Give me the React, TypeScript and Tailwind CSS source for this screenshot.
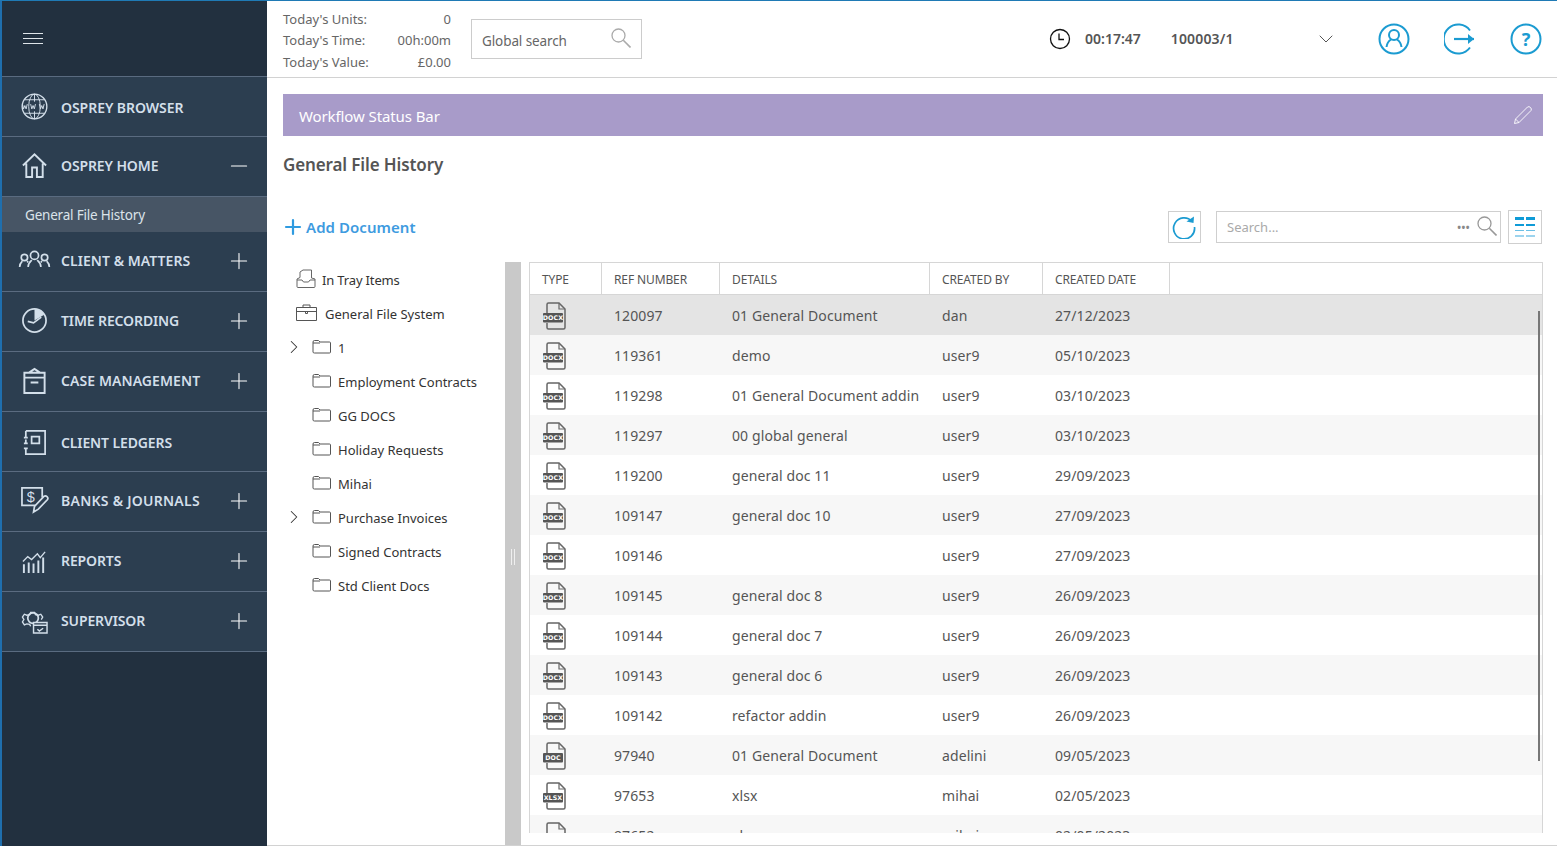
import { ChevronDown, ChevronRight, Minus, Plus } from 'lucide-react';
import type { ReactNode } from 'react';

const font = "font-['Noto_Sans','Open_Sans',sans-serif]";

function Svg({ size, children, className }: { size: number; children: ReactNode; className?: string }) {
  return (
    <svg width={size} height={size} viewBox="0 0 28 28" fill="none" stroke="currentColor" strokeWidth="1.4" className={className}>
      {children}
    </svg>
  );
}

function SearchGlass({ className }: { className?: string }) {
  return (
    <svg width="20" height="20" viewBox="0 0 20 20" fill="none" stroke="currentColor" strokeWidth="1.300" className={className}>
      <circle cx="7.500" cy="7.500" r="6.500" />
      <path d="M12.300 12.300L19.500 19.500" strokeWidth="1.600" />
    </svg>
  );
}

const navIcons: Record<string, ReactNode> = {
  globe: (
    <>
      <circle cx="14" cy="14" r="12.800" />
      <ellipse cx="14" cy="14" rx="6" ry="12.800" strokeWidth="1" />
      <path d="M3.500 7h21M3.500 21h21M14 1v8M14 19v8" strokeWidth="1" />
      <path d="M1.500 11.500l1.200 5 1.300-3.500 1.300 3.500 1.200-5M10 11.500l1.200 5 1.300-3.500 1.300 3.500 1.200-5M19 11.500l1.200 5 1.300-3.500 1.300 3.500 1.200-5" strokeWidth="1" />
    </>
  ),
  home: <path d="M2 14L14 2.500 26 14M5.500 12v14h6V16h5v10h6V12" strokeWidth="2" />,
  clients: (
    <g transform="translate(-1.400 1) scale(1.100)">
      <circle cx="14" cy="7" r="3.800" strokeWidth="1.600" />
      <path d="M8 18c0-4 2.500-5.500 3.500-6.500M20 18c0-4-2.500-5.500-3.500-6.500" strokeWidth="1.600" />
      <circle cx="4.500" cy="9" r="3" strokeWidth="1.600" />
      <path d="M0 18c0-3 1.500-4.500 2.500-5.500M7 12.500l1 1" strokeWidth="1.600" />
      <circle cx="23.500" cy="9" r="3" strokeWidth="1.600" />
      <path d="M28 18c0-3-1.500-4.500-2.500-5.500M21 12.500l-1 1" strokeWidth="1.600" />
    </g>
  ),
  time: (
    <>
      <circle cx="14" cy="14" r="12" strokeWidth="1.800" />
      <path d="M14 2a12 12 0 0 1 10 6l-10 6z" fill="currentColor" stroke="none" />
      <path d="M7 15l6 1.500 8-6" strokeWidth="1.800" />
    </>
  ),
  case: <path d="M3.500 6h21v21h-21zM3.500 11h21M10 16h8M8 6l3-2 3-2 3 2 3 2" strokeWidth="2" />,
  ledger: <path d="M5 2h20v24H5v-5M5 8V2M5 11v3M3 9h4M3 15h4M3 20h4M11 8h8v7h-8z" strokeWidth="1.800" />,
  banks: (
    <>
      <path d="M15 19H1V1h21v10" strokeWidth="1.800" />
      <text x="6" y="15.500" fontSize="15" fill="currentColor" stroke="none" fontFamily="Liberation Sans">$</text>
      <path d="M13 26l1-6L24 9.500q1.500-1 3 .5t.5 3L18 23z" strokeWidth="1.800" />
    </>
  ),
  reports: (
    <>
      <path d="M2 15l5-5 4 3 6-6 3 4 5-6" strokeWidth="1.400" />
      <path d="M3 27V18M8 27V16M13 27V17M18 27V14M23 27V11" strokeWidth="2" />
    </>
  ),
  supervisor: (
    <>
      <path d="M10 20l-1-2-3-.5-2.500 1-2-3 1.500-2.500-1.500-2.500 2-3 2.500 1 3-.5 1-2.500h4l1 2.500 3 .5 2.500-1 2 3-1.500 2.500" strokeWidth="1.400" />
      <circle cx="12.500" cy="11.500" r="5.500" strokeWidth="1.800" />
      <path d="M13 16h14v11H13zM13 19h14M17 23l2 2 4-3" fill="#2c3e50" strokeWidth="1.500" />
    </>
  ),
};

const navItems = [
  { label: 'CLIENT & MATTERS', icon: 'clients', plus: true, pad: 'pb-[2px]', track: 'tracking-[0.05px]' },
  { label: 'TIME RECORDING', icon: 'time', plus: true, pad: 'pb-[2px]' },
  { label: 'CASE MANAGEMENT', icon: 'case', plus: true, pad: 'pb-[2px]', track: 'tracking-[0.08px]' },
  { label: 'CLIENT LEDGERS', icon: 'ledger', plus: false, pad: 'pt-[1px]' },
  { label: 'BANKS & JOURNALS', icon: 'banks', plus: true, pad: 'pb-[2px]', track: 'tracking-[0.25px]' },
  { label: 'REPORTS', icon: 'reports', plus: true, pad: 'pb-[2px]' },
  { label: 'SUPERVISOR', icon: 'supervisor', plus: true, pad: 'pb-[2px]' },
];

function NavRow({ label, icon, trailing, className, labelClass }: { label: string; icon: string; trailing?: ReactNode; className?: string; labelClass?: string }) {
  return (
    <div className={`h-[60px] flex items-center border-b border-[#5a6b80] pl-[19px] pr-[20px] bg-[#2c3e50] text-[#d3dfea] ${className ?? ''}`}>
      <div className="w-[27px] flex justify-center">
        <Svg size={27} className="overflow-visible">{navIcons[icon]}</Svg>
      </div>
      <span className={`ml-[13px] flex-1 text-[14px] font-semibold ${labelClass ?? 'tracking-[-0.12px]'}`}>{label}</span>
      {trailing}
    </div>
  );
}

const tree = [
  { label: 'Employment Contracts' },
  { label: 'GG DOCS' },
  { label: 'Holiday Requests' },
  { label: 'Mihai' },
  { label: 'Purchase Invoices', arrow: true },
  { label: 'Signed Contracts' },
  { label: 'Std Client Docs' },
];

function Folder() {
  return (
    <svg width="19" height="15" viewBox="0 0 19 15" fill="none" stroke="#555" strokeWidth="1" className="-mt-[3px]">
      <path d="M1 13V3q0-1.500 1.500-1.500h4L8 3h9.500q1 0 1 1v9q0 1-1 1h-15q-1.500 0-1.500-1zM1 4h7" />
    </svg>
  );
}

function TreeFolder({ label, arrow }: { label: string; arrow?: boolean }) {
  return (
    <div className="h-[34px] flex items-center pl-[5px]">
      <div className="w-[24px]">{arrow && <ChevronRight size={22} strokeWidth={1.100} className="text-[#333] -ml-[5px] -mt-[2px]" />}</div>
      <Folder />
      <span className="ml-[7px] mt-[2px]">{label}</span>
    </div>
  );
}

function FileIcon({ kind }: { kind: string }) {
  return (
    <svg width="26" height="28" viewBox="0 0 26 28" className="block mt-[1px]">
      <path d="M5 11V2.500q0-1.500 1.500-1.500H17l6 6v18.500q0 1.500-1.500 1.500H6.500Q5 27 5 25.500V21" fill="none" stroke="#666" strokeWidth="1.500" />
      <path d="M17 1v6h6" fill="none" stroke="#666" strokeWidth="1.200" />
      <rect x="1" y="11" width="20" height="9.500" rx="1" fill="#555" />
      <text x="11" y="18.200" textAnchor="middle" fontSize="6.300" fontWeight="700" fill="#fff" fontFamily="DejaVu Sans">{kind}</text>
    </svg>
  );
}

const rows = [
  { kind: 'DOCX', ref: '120097', details: '01 General Document', by: 'dan', date: '27/12/2023' },
  { kind: 'DOCX', ref: '119361', details: 'demo', by: 'user9', date: '05/10/2023' },
  { kind: 'DOCX', ref: '119298', details: '01 General Document addin', by: 'user9', date: '03/10/2023' },
  { kind: 'DOCX', ref: '119297', details: '00 global general', by: 'user9', date: '03/10/2023' },
  { kind: 'DOCX', ref: '119200', details: 'general doc 11', by: 'user9', date: '29/09/2023' },
  { kind: 'DOCX', ref: '109147', details: 'general doc 10', by: 'user9', date: '27/09/2023' },
  { kind: 'DOCX', ref: '109146', details: '', by: 'user9', date: '27/09/2023' },
  { kind: 'DOCX', ref: '109145', details: 'general doc 8', by: 'user9', date: '26/09/2023' },
  { kind: 'DOCX', ref: '109144', details: 'general doc 7', by: 'user9', date: '26/09/2023' },
  { kind: 'DOCX', ref: '109143', details: 'general doc 6', by: 'user9', date: '26/09/2023' },
  { kind: 'DOCX', ref: '109142', details: 'refactor addin', by: 'user9', date: '26/09/2023' },
  { kind: 'DOC', ref: '97940', details: '01 General Document', by: 'adelini', date: '09/05/2023' },
  { kind: 'XLSX', ref: '97653', details: 'xlsx', by: 'mihai', date: '02/05/2023' },
  { kind: 'XLSX', ref: '97652', details: 'xlsx', by: 'mihai', date: '02/05/2023' },
];

const columns = [
  { label: 'TYPE', w: 'w-[72px]' },
  { label: 'REF NUMBER', w: 'w-[118px]' },
  { label: 'DETAILS', w: 'w-[210px]' },
  { label: 'CREATED BY', w: 'w-[113px]' },
  { label: 'CREATED DATE', w: 'w-[127px]' },
];

export default function App() {
  const plus = <Plus size={26} strokeWidth={1} className="text-white -mx-[5px]" />;

  return (
    <div className={`${font} h-[846px] w-[1557px] overflow-hidden bg-white flex border-t border-[#1f7ab5]`}>
      {/* sidebar */}
      <aside className="w-[267px] shrink-0 flex flex-col bg-[#22303f] border-l-2 border-[#1f6fae]">
        <div className="h-[76px] shrink-0 flex items-center pl-[21px] border-b border-[#5a6b80]">
          <div className="w-[20px] flex flex-col gap-[4px] -mt-[1px]">
            <div className="h-px bg-[#dfe5ea]" />
            <div className="h-px bg-[#dfe5ea]" />
            <div className="h-px bg-[#dfe5ea]" />
          </div>
        </div>
        <NavRow label="OSPREY BROWSER" icon="globe" labelClass="mt-[2px] tracking-[-0.05px]" />
        <NavRow
          label="OSPREY HOME"
          icon="home"
          className="pb-[2px]"
          trailing={<Minus size={26} strokeWidth={1} className="text-white -mx-[5px]" />}
        />
        <div className="h-[35px] flex items-center pl-[23px] pt-[2px] bg-[#475565] text-[#dbe3ea] text-[13.500px] tracking-[-0.2px]">General File History</div>
        {navItems.map(n => (
          <NavRow
            key={n.label}
            label={n.label}
            icon={n.icon}
            className={n.pad}
            labelClass={n.track}
            trailing={n.plus ? plus : undefined}
          />
        ))}
      </aside>

      <main className="flex-1 min-w-0 flex flex-col">
        {/* top bar */}
        <header className="h-[77px] shrink-0 flex items-center border-b border-[#d2d2d2] pl-[16px] text-[#666]">
          <div className="w-[168px] text-[13px] leading-[21.500px] mt-[4px]">
            <div className="flex justify-between"><span>Today's Units:</span><span>0</span></div>
            <div className="flex justify-between"><span>Today's Time:</span><span>00h:00m</span></div>
            <div className="flex justify-between"><span>Today's Value:</span><span>£0.00</span></div>
          </div>
          <div className="ml-[20px] w-[171px] h-[40px] border border-[#cccccc] flex items-center justify-between pl-[10px] pr-[10px] text-[13.500px] tracking-[-0.1px]">
            <span className="mt-[4px]">Global search</span>
            <SearchGlass className="text-[#aaa] -mt-[3px]" />
          </div>
          <svg width="22" height="22" viewBox="0 0 22 22" fill="none" stroke="#111" strokeWidth="1.300" className="ml-[407px]">
            <circle cx="11" cy="11" r="9.500" />
            <path d="M10 5.500v6h5" />
          </svg>
          <span className="ml-[14px] text-[14px] font-semibold text-[#555] -mt-[2px]">00:17:47</span>
          <span className="ml-[30px] text-[14px] font-semibold text-[#555] tracking-[0.15px] -mt-[2px]">100003/1</span>
          <ChevronDown size={24} strokeWidth={1} className="ml-[80px] text-[#555]" />
          <svg width="32" height="32" viewBox="0 0 32 32" fill="none" stroke="#1b9bd1" strokeWidth="2" className="ml-[40px]">
            <circle cx="16" cy="16" r="14.500" />
            <circle cx="16" cy="12" r="5" />
            <path d="M8.500 24c.5-4 3-6.500 4.500-7.500M23.500 24c-.5-4-3-6.500-4.500-7.500" />
          </svg>
          <svg width="32" height="32" viewBox="0 0 32 32" fill="none" stroke="#1b9bd1" strokeWidth="2" className="ml-[34px]">
            <path d="M26 7.500A14.500 14.500 0 1 0 26 24.500" />
            <path d="M10 16h20" strokeWidth="2.200" />
            <path d="M24 11l6 5-6 5z" fill="#1b9bd1" stroke="none" />
          </svg>
          <svg width="32" height="32" viewBox="0 0 32 32" fill="none" stroke="#1b9bd1" strokeWidth="2" className="ml-[34px]">
            <circle cx="16" cy="16" r="14.500" />
            <text x="16" y="22.500" textAnchor="middle" fontSize="18" fontWeight="700" fill="#1b9bd1" stroke="none" fontFamily="Noto Sans">?</text>
          </svg>
        </header>

        <div className="flex-1 min-h-0 flex flex-col pl-[16px] pr-[14px] pt-[16px]">
          <div className="h-[42px] shrink-0 bg-[#a89bc9] flex items-center justify-between pl-[16px] pr-[10px] text-white text-[15px] tracking-[-0.1px]">
            <span className="mt-[2px]">Workflow Status Bar</span>
            <svg width="20" height="20" viewBox="0 0 20 20" fill="none" stroke="#fff" strokeWidth="0.900">
              <path d="M1.500 18.500l1-4.500L14.500 2q1.500-1 3 .5t.5 3L6 17.500zM2.500 14L6 17.500" />
            </svg>
          </div>

          <h1 className="mt-[16px] h-[26px] text-[17px] leading-[26px] font-semibold text-[#555] tracking-[-0.12px]">General File History</h1>

          <div className="mt-[31px] h-[36px] shrink-0 flex items-center">
            <Plus size={24} strokeWidth={2.200} className="text-[#2f9be0] -ml-[2px]" />
            <span className="ml-[1px] text-[15px] font-semibold text-[#3e9be0] tracking-[0.05px]">Add Document</span>
            <div className="ml-auto w-[33px] h-[32px] border border-[#cfcfcf] flex items-center justify-center">
              <svg width="24" height="24" viewBox="0 0 24 24" fill="none" stroke="#1b9bd1" strokeWidth="1.700" className="-ml-[2px]">
                <path d="M20 6.500A10.500 10.500 0 1 0 22.500 12" />
                <path d="M14.500 6.500L21.500 8l.5-6.500z" fill="#1b9bd1" stroke="none" />
              </svg>
            </div>
            <div className="ml-[15px] w-[285px] h-[32px] border border-[#cfcfcf] flex items-center pl-[10px] pr-[3px] text-[13px] text-[#aaa]">
              <span className="flex-1 mt-[1px]">Search...</span>
              <span className="text-[#888] text-[10px] font-bold tracking-[0.5px] mr-[7px]">•••</span>
              <SearchGlass className="text-[#999] -mt-[2px]" />
            </div>
            <div className="ml-[7px] mr-[1px] w-[34px] h-[34px] border border-[#cfcfcf] flex flex-col justify-center items-center gap-[4px]">
              <div className="flex gap-[2px]"><div className="w-[9px] h-[3px] bg-[#0f9bd7]" /><div className="w-[9px] h-[3px] bg-[#0f9bd7]" /></div>
              <div className="flex gap-[2px]"><div className="w-[9px] h-[2px] bg-[#0f9bd7]" /><div className="w-[9px] h-[2px] bg-[#0f9bd7]" /></div>
              <div className="flex gap-[2px]"><div className="w-[9px] h-px bg-[#6cc0e6]" /><div className="w-[9px] h-px bg-[#6cc0e6]" /></div>
              <div className="flex gap-[2px]"><div className="w-[9px] h-[2px] bg-[#9dd4ee]" /><div className="w-[9px] h-[2px] bg-[#9dd4ee]" /></div>
            </div>
          </div>

          <div className="mt-[17px] flex-1 min-h-0 flex">
            {/* tree */}
            <div className="w-[222px] shrink-0 pt-[1px] text-[13px] text-[#333]">
              <div className="h-[34px] flex items-center pl-[13px]">
                <svg width="20" height="19" viewBox="0 0 20 19" fill="none" stroke="#666" strokeWidth="1" className="-mt-[3px]">
                  <path d="M1 17.500V10l3-1.500V3l3-2h8.500v8L19 10v7.500q0 1-1 1H2q-1 0-1-1zM1 11h5l1.500 2h5l1.500-2h5" />
                </svg>
                <span className="ml-[6px] mt-[1px] tracking-[-0.15px]">In Tray Items</span>
              </div>
              <div className="h-[34px] flex items-center pl-[13px]">
                <svg width="21" height="17" viewBox="0 0 21 17" fill="none" stroke="#555" strokeWidth="1" className="-mt-[3px]">
                  <path d="M.5 3.500h20v13H.5zM.5 7.500h20M7 3.500V1h7v2.500M9.500 7.500h2v2h-2z" />
                </svg>
                <span className="ml-[8px] mt-[1px]">General File System</span>
              </div>
              <TreeFolder label="1" arrow />
              {tree.map(t => (
                <TreeFolder key={t.label} label={t.label} arrow={t.arrow} />
              ))}
            </div>

            {/* splitter */}
            <div className="w-[16px] shrink-0 bg-[#c9c9c9] flex items-center justify-center">
              <div className="h-[16px] w-[4px] border-x border-[#efefef] mt-[6px]" />
            </div>

            {/* grid */}
            <div className="ml-[8px] flex-1 min-w-0 h-[571px] relative overflow-hidden border-x border-t border-[#d6d6d6] text-[14px] tracking-[0.1px] text-[#555]">
              <div className="h-[32px] flex border-b border-[#d6d6d6] text-[12px] font-normal text-[#555] tracking-[-0.12px]">
                {columns.map(c => (
                  <div key={c.label} className={`${c.w} pl-[12px] flex items-center border-r border-[#d6d6d6] pt-[3px]`}>{c.label}</div>
                ))}
              </div>
              {rows.map((r, i) => (
                <div key={r.ref} className={`h-[40px] flex items-center ${i === 0 ? 'bg-[#e4e4e4]' : i % 2 === 1 ? 'bg-[#f7f7f7]' : 'bg-white'}`}>
                  <div className="w-[72px] pl-[12px]"><FileIcon kind={r.kind} /></div>
                  <div className="w-[118px] pl-[12px]">{r.ref}</div>
                  <div className="w-[210px] pl-[12px] whitespace-nowrap">{r.details}</div>
                  <div className="w-[113px] pl-[12px]">{r.by}</div>
                  <div className="w-[127px] pl-[12px]">{r.date}</div>
                </div>
              ))}
              <div className="absolute right-[2px] top-[48px] h-[450px] w-[2px] bg-[#777]" />
            </div>
          </div>
        </div>
        <div className="h-px shrink-0 bg-[#d2d2d2]" />
      </main>
    </div>
  );
}
